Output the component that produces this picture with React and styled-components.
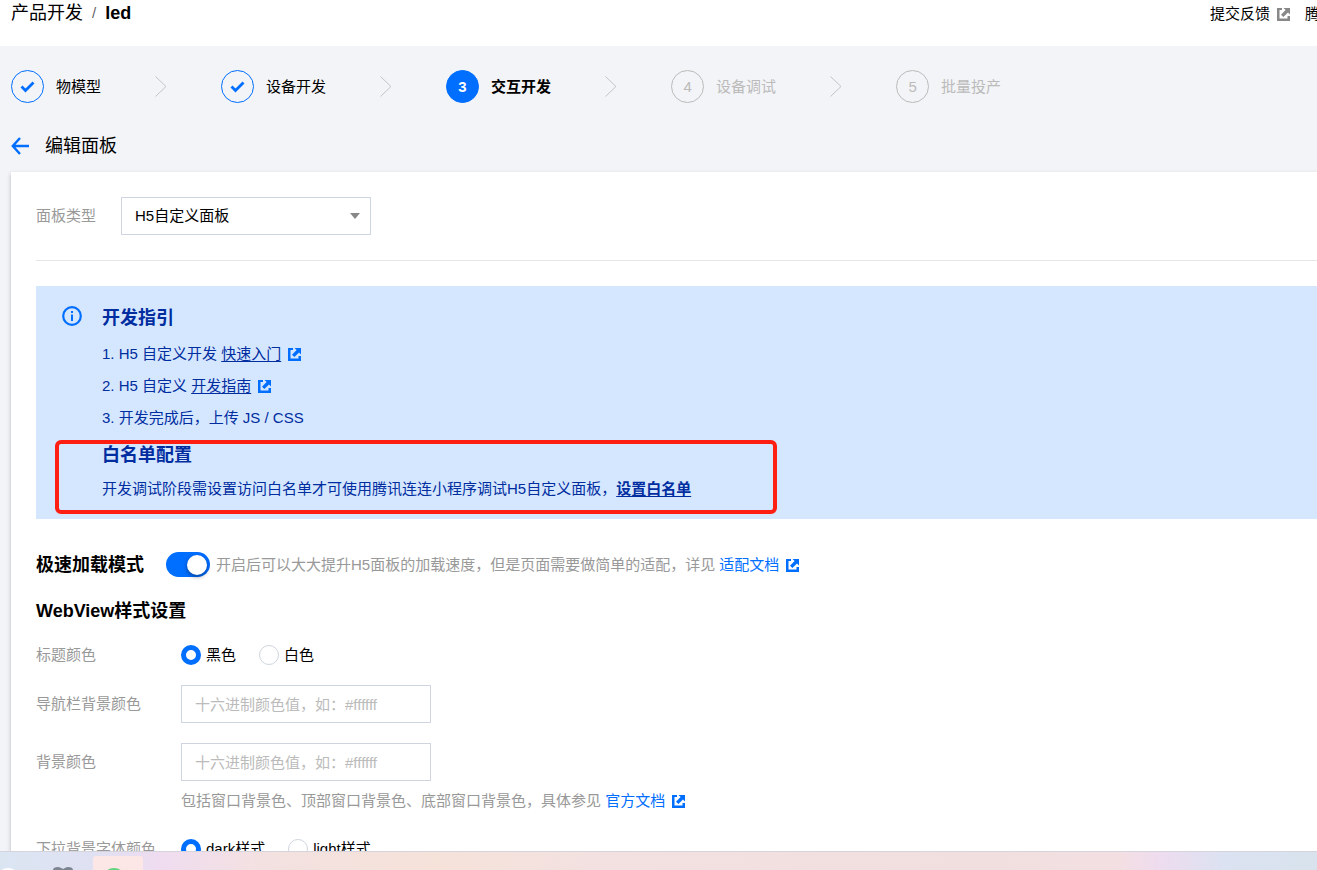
import React, { useState } from 'react'
import styled, { createGlobalStyle, css } from 'styled-components'

const theme = {
    blue: '#006eff',
    navy: '#002da0',
    text: '#000000',
    grey: '#999999',
    light: '#bbbbbb',
    border: '#cfd5de',
    page: '#f3f4f7',
    notice: '#d5e7ff',
}

const steps = [
    { id: 1, label: '物模型', state: 'done' },
    { id: 2, label: '设备开发', state: 'done' },
    { id: 3, label: '交互开发', state: 'current' },
    { id: 4, label: '设备调试', state: 'todo' },
    { id: 5, label: '批量投产', state: 'todo' },
]

const ExternalIcon = ({ color = theme.blue }) => (
    <IconStyled width="13" height="13" viewBox="0 0 13 13" fill={color} aria-hidden="true">
        <path d="M0 0h5v2H2.5v8.5H10.5V8H13v5H0z" />
        <path d="M6.5 0H13v6.5l-2-2-4.6 4.6-2.4-2.4L8.6 2.1z" />
    </IconStyled>
)

const RadioField = ({ name, options }) => {
    const [value, setValue] = useState(options[0])

    return (
        <RadioGroup>
            {options.map((option) => (
                <RadioLabel key={option}>
                    <Radio name={name} checked={value === option} onChange={() => setValue(option)} />
                    {option}
                </RadioLabel>
            ))}
        </RadioGroup>
    )
}

const App = () => {
    const [fastMode, setFastMode] = useState(true)

    return (
        <Page>
            <GlobalStyle />
            <TopBar>
                <Breadcrumb>
                    <CrumbLink href="#">产品开发</CrumbLink>
                    <Slash>/</Slash>
                    <strong>led</strong>
                </Breadcrumb>
                <TopLinks>
                    <TopLink href="#">提交反馈<ExternalIcon color="#888888" /></TopLink>
                    <TopLink href="#">腾讯连连</TopLink>
                </TopLinks>
            </TopBar>

            <Main>
                <Steps>
                    {steps.map((step, index) => (
                        <React.Fragment key={step.id}>
                            {index > 0 && (
                                <Chevron width="12" height="21" viewBox="0 0 12 21" aria-hidden="true">
                                    <path d="M.5.5l10.5 10-10.5 10" />
                                </Chevron>
                            )}
                            <Step $state={step.state}>
                                <StepCircle $state={step.state}>
                                    {step.state === 'done' ? (
                                        <svg width="15" height="12" viewBox="0 0 15 12" fill="none" stroke={theme.blue} strokeWidth="2.8">
                                            <path d="M1.5 5.5l4 4 8-8" />
                                        </svg>
                                    ) : step.id}
                                </StepCircle>
                                {step.label}
                            </Step>
                        </React.Fragment>
                    ))}
                </Steps>

                <TitleRow>
                    <BackButton aria-label="返回">
                        <svg width="18" height="18" viewBox="0 0 18 18" fill="none" stroke={theme.blue} strokeWidth="2.4">
                            <path d="M9 1L1.8 9 9 17M2 9h16" />
                        </svg>
                    </BackButton>
                    <PageTitle>编辑面板</PageTitle>
                </TitleRow>

                <Panel>
                    <TypeRow>
                        <GreyLabel htmlFor="panel-type">面板类型</GreyLabel>
                        <SelectBox>
                            <Select id="panel-type">
                                <option>H5自定义面板</option>
                            </Select>
                            <Caret width="10" height="6" viewBox="0 0 10 6" aria-hidden="true">
                                <path d="M0 0h10L5 6z" />
                            </Caret>
                        </SelectBox>
                    </TypeRow>

                    <Notice>
                        <svg width="20" height="20" viewBox="0 0 20 20" aria-hidden="true">
                            <circle cx="10" cy="10" r="8.8" fill="none" stroke={theme.blue} strokeWidth="2.2" />
                            <path fill={theme.blue} d="M9 5h2v2H9zM9 8.5h2V15H9z" />
                        </svg>
                        <NoticeBody>
                            <NoticeTitle>开发指引</NoticeTitle>
                            <GuideLine>1. H5 自定义开发 <GuideLink href="#">快速入门</GuideLink><ExternalIcon /></GuideLine>
                            <GuideLine>2. H5 自定义 <GuideLink href="#">开发指南</GuideLink><ExternalIcon /></GuideLine>
                            <GuideLine>3. 开发完成后，上传 JS / CSS</GuideLine>
                            <Whitelist>
                                <NoticeTitle>白名单配置</NoticeTitle>
                                <GuideLine>
                                    开发调试阶段需设置访问白名单才可使用腾讯连连小程序调试H5自定义面板，
                                    <GuideLink href="#" $bold>设置白名单</GuideLink>
                                </GuideLine>
                                <Highlight />
                            </Whitelist>
                        </NoticeBody>
                    </Notice>

                    <FastRow>
                        <SectionTitle as="label" htmlFor="fast-mode">极速加载模式</SectionTitle>
                        <Switch id="fast-mode" checked={fastMode} onChange={() => setFastMode(!fastMode)} />
                        <Hint>
                            开启后可以大大提升H5面板的加载速度，但是页面需要做简单的适配，详见 <DocLink href="#">适配文档</DocLink><ExternalIcon />
                        </Hint>
                    </FastRow>

                    <SectionTitle>WebView样式设置</SectionTitle>

                    <Form>
                        <GreyLabel as="span">标题颜色</GreyLabel>
                        <RadioField name="title-color" options={['黑色', '白色']} />

                        <GreyLabel htmlFor="nav-bg">导航栏背景颜色</GreyLabel>
                        <TextInput id="nav-bg" placeholder="十六进制颜色值，如：#ffffff" />

                        <GreyLabel htmlFor="page-bg">背景颜色</GreyLabel>
                        <TextInput id="page-bg" placeholder="十六进制颜色值，如：#ffffff" />
                        <FieldHint>
                            包括窗口背景色、顶部窗口背景色、底部窗口背景色，具体参见 <DocLink href="#">官方文档</DocLink><ExternalIcon />
                        </FieldHint>

                        <GreyLabel as="span">下拉背景字体颜色</GreyLabel>
                        <RadioField name="pull-style" options={['dark样式', 'light样式']} />
                    </Form>
                </Panel>
            </Main>

            <Taskbar>
                <svg width="160" height="18" viewBox="0 0 160 18" aria-hidden="true">
                    <circle cx="8" cy="28" r="12" fill="#ffffff" />
                    <path d="M53 18c0-2 2-3 5-3 2 0 3 1 5 2 2-1 3-2 5-2 3 0 5 1 5 3z" fill="#7c8592" />
                    <rect x="93" y="4" width="50" height="24" rx="3" fill="#fde6e6" />
                    <circle cx="114" cy="28" r="12" fill="#5fd47c" />
                </svg>
            </Taskbar>
        </Page>
    )
}

const GlobalStyle = createGlobalStyle`
    * {
        box-sizing: border-box;
    }

    body {
        margin: 0;
        font-family: "Liberation Sans", "Noto Sans CJK SC", sans-serif;
        font-size: 15px;
        line-height: 20px;
        color: ${theme.text};
        background: ${theme.page};
    }

    input, select, button {
        font: inherit;
    }
`;

const IconStyled = styled.svg`
    flex: none;
    margin-left: 7px;
    vertical-align: -2px;
`;

const Page = styled.div`
    display: flex;
    flex-direction: column;
    height: 100vh;
    overflow: hidden;
`;

const TopBar = styled.header`
    flex: none;
    display: flex;
    justify-content: space-between;
    height: 46px;
    padding: 3px 0 0 11px;
    background: #ffffff;
    overflow: hidden;
`;

const Breadcrumb = styled.nav`
    display: flex;
    font-size: 18px;
`;

const CrumbLink = styled.a`
    color: inherit;
    text-decoration: none;
`;

const Slash = styled.span`
    padding: 0 9px;
    font-size: 15px;
    color: #666666;
`;

const TopLinks = styled.nav`
    display: flex;
    gap: 15px;
    width: 107px;
    padding-top: 1px;
    white-space: nowrap;
`;

const TopLink = styled.a`
    flex: none;
    color: inherit;
    text-decoration: none;
`;

const Main = styled.main`
    flex: 1;
    display: flex;
    flex-direction: column;
    min-height: 0;
    padding: 24px 0 0 11px;
    overflow: hidden;
`;

const Steps = styled.div`
    flex: none;
    display: flex;
    align-items: center;
    gap: 54px;
`;

const Step = styled.div`
    display: flex;
    align-items: center;
    gap: 12px;
    white-space: nowrap;
    color: ${({ $state }) => ($state === 'todo' ? theme.light : theme.text)};
    font-weight: ${({ $state }) => ($state === 'current' ? 700 : 400)};
`;

const StepCircle = styled.span`
    display: flex;
    align-items: center;
    justify-content: center;
    width: 33px;
    height: 33px;
    border: 1px solid ${({ $state }) => ($state === 'todo' ? theme.light : theme.blue)};
    border-radius: 50%;

    ${({ $state }) => $state === 'current' && css`
        background: ${theme.blue};
        color: #ffffff;
    `}
`;

const Chevron = styled.svg`
    flex: none;
    fill: none;
    stroke: #c4c4c4;
`;

const TitleRow = styled.div`
    flex: none;
    display: flex;
    align-items: center;
    gap: 16px;
    padding: 32px 0 15px;
`;

const BackButton = styled.button`
    display: flex;
    padding: 0;
    border: none;
    background: none;
    cursor: pointer;
`;

const PageTitle = styled.h1`
    margin: 0;
    font-size: 18px;
    font-weight: 400;
    line-height: 22px;
`;

const Panel = styled.section`
    flex: none;
    padding: 25px 0 25px 25px;
    background: #ffffff;
    box-shadow: 0 2px 4px 0 rgb(54 58 80 / 32%);
`;

const TypeRow = styled.div`
    display: flex;
    align-items: center;
    gap: 25px;
    padding-bottom: 25px;
    border-bottom: 1px solid #e5e5e5;
`;

const GreyLabel = styled.label`
    color: ${theme.grey};
    white-space: nowrap;
`;

const field = css`
    width: 250px;
    height: 38px;
    padding: 0 13px;
    border: 1px solid ${theme.border};
    border-radius: 0;
    background: #ffffff;
    color: ${theme.text};
    outline: none;
`;

const SelectBox = styled.div`
    position: relative;
`;

const Select = styled.select`
    ${field}
    display: block;
    appearance: none;
`;

const Caret = styled.svg`
    position: absolute;
    top: 16px;
    right: 11px;
    fill: #888888;
    pointer-events: none;
`;

const TextInput = styled.input.attrs({ type: 'text' })`
    ${field}

    &::placeholder {
        color: ${theme.light};
        opacity: 1;
    }
`;

const Notice = styled.div`
    display: flex;
    gap: 20px;
    margin: 25px 0 33px;
    padding: 20px 26px 14px;
    background: ${theme.notice};
    color: ${theme.navy};

    > svg {
        flex: none;
    }
`;

const NoticeBody = styled.div`
    flex: 1;
`;

const NoticeTitle = styled.h2`
    margin: 0 0 8px;
    font-size: 18px;
    line-height: 24px;
`;

const GuideLine = styled.p`
    margin: 0;
    padding: 6px 0;
`;

const GuideLink = styled.a`
    color: inherit;
    font-weight: ${({ $bold }) => ($bold ? 700 : 400)};
    text-underline-offset: 2px;
`;

const Whitelist = styled.div`
    position: relative;
    padding-top: 9px;

    ${NoticeTitle} {
        margin-bottom: 6px;
    }
`;

/* red frame drawn over the whitelist block */
const Highlight = styled.div`
    position: absolute;
    top: 6px;
    bottom: -9px;
    left: -47px;
    width: 722px;
    border: 4px solid #ff1e12;
    border-radius: 6px;
    pointer-events: none;
`;

const FastRow = styled.div`
    display: flex;
    align-items: center;
    margin-bottom: 22px;
`;

const SectionTitle = styled.h2`
    margin: 0;
    font-size: 18px;
    font-weight: 700;
    line-height: 24px;
`;

const Switch = styled.input.attrs({ type: 'checkbox', role: 'switch' })`
    flex: none;
    display: flex;
    align-items: center;
    justify-content: flex-end;
    width: 44px;
    height: 25px;
    margin: 0 6px 0 22px;
    padding: 0 3px;
    appearance: none;
    border-radius: 13px;
    background: ${theme.blue};
    cursor: pointer;

    &::before {
        content: "";
        width: 20px;
        height: 20px;
        border-radius: 50%;
        background: #ffffff;
        box-shadow: 0 2px 4px rgb(0 0 0 / 40%);
    }

    &:not(:checked) {
        justify-content: flex-start;
        background: ${theme.light};
    }
`;

const Hint = styled.span`
    color: ${theme.grey};
    white-space: nowrap;
`;

const DocLink = styled.a`
    color: ${theme.blue};
    text-decoration: none;
`;

const Form = styled.div`
    display: grid;
    grid-template-columns: 145px 1fr;
    align-items: center;
    row-gap: 20px;
    margin-top: 22px;
`;

const FieldHint = styled(Hint)`
    grid-column: 2;
    margin: -10px 0 8px;
`;

const RadioGroup = styled.div`
    display: flex;
    gap: 23px;
`;

const RadioLabel = styled.label`
    display: flex;
    align-items: center;
    gap: 5px;
`;

const Radio = styled.input.attrs({ type: 'radio' })`
    width: 20px;
    height: 20px;
    margin: 0;
    appearance: none;
    border: 1px solid ${theme.border};
    border-radius: 50%;
    background: #ffffff;

    &:checked {
        border: 5px solid ${theme.blue};
    }
`;

const Taskbar = styled.footer`
    flex: none;
    height: 19px;
    border-top: 1px solid #d5d3dc;
    background: linear-gradient(90deg, #dbe5f2 0, #dfe1f2 7%, #efdcf0 12%, #f3e1e1 20%, #f5e2d9 33%, #f3e1e1 45%, #f1dfdf 75%, #f3dfe2 85%, #eedcef 88%, #dbe2f1 93%, #d8e3ed 100%);

    svg {
        display: block;
    }
`;

export default App
